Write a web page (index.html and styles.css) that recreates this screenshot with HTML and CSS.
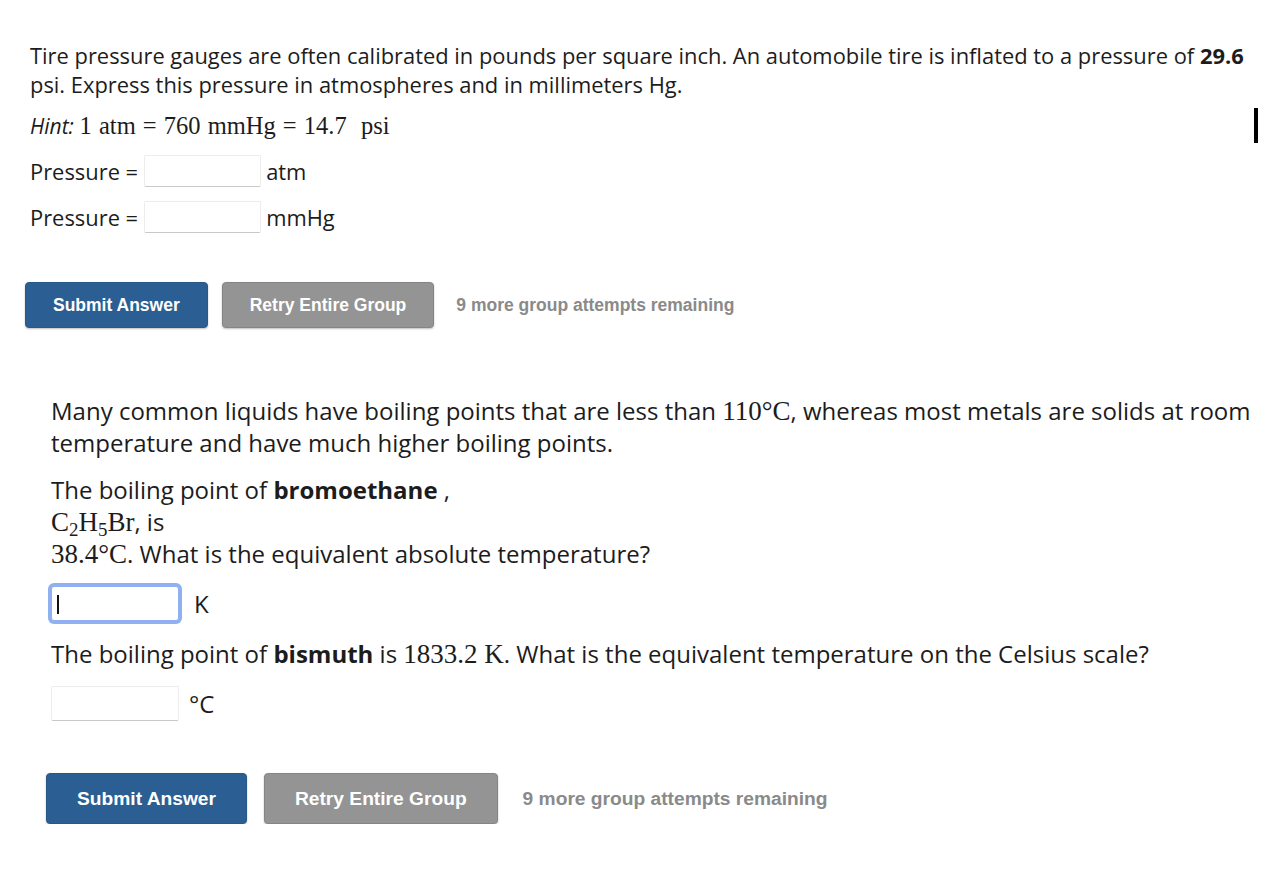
FILE: index.html
```html
<!DOCTYPE html>
<html lang="en">

<head>
    <meta charset="UTF-8">
    <title>Question Group</title>
    <link rel="stylesheet" href="styles.css">
</head>

<body>
    <span class="mouse-caret"></span>

    <div class="question q1">
        <p class="stem">Tire pressure gauges are often calibrated in pounds per square inch. An automobile tire is
            inflated to a pressure of <b>29.6</b> psi. Express this pressure in atmospheres and in millimeters Hg.</p>
        <p class="hint"><i>Hint:</i> <span class="math">1 atm = 760 mmHg = 14.7&nbsp; psi</span></p>

        <div class="answer-row">
            <span class="label">Pressure =</span>
            <input type="text" class="answer">
            <span class="unit">atm</span>
        </div>
        <div class="answer-row">
            <span class="label">Pressure =</span>
            <input type="text" class="answer">
            <span class="unit">mmHg</span>
        </div>

        <div class="actions">
            <button class="btn btn-submit">Submit Answer</button>
            <button class="btn btn-retry">Retry Entire Group</button>
            <span class="attempts">9 more group attempts remaining</span>
        </div>
    </div>

    <div class="question q2">
        <p class="stem">Many common liquids have boiling points that are less than <span class="math">110°C</span>,
            whereas most metals are solids at room temperature and have much higher boiling points.</p>
        <p class="stem">The boiling point of <b>bromoethane</b> ,<br>
            <span class="math">C<sub>2</sub>H<sub>5</sub>Br</span>, is<br>
            <span class="math">38.4°C</span>. What is the equivalent absolute temperature?</p>

        <div class="answer-row">
            <span class="input-wrap">
                <input type="text" class="answer focused">
                <span class="text-caret"></span>
            </span>
            <span class="unit unit-k">K</span>
        </div>

        <p class="stem">The boiling point of <b>bismuth</b> is <span class="math">1833.2 K</span>. What is the
            equivalent temperature on the Celsius scale?</p>

        <div class="answer-row">
            <input type="text" class="answer">
            <span class="unit unit-c">°C</span>
        </div>

        <div class="actions">
            <button class="btn btn-submit">Submit Answer</button>
            <button class="btn btn-retry">Retry Entire Group</button>
            <span class="attempts">9 more group attempts remaining</span>
        </div>
    </div>
</body>

</html>
```

FILE: styles.css
```css
body {
    margin: 0;
    font-family: "Open Sans", "Noto Sans", sans-serif;
    color: #1c1c1c;
    background: #fff;
}

p {
    margin: 0;
}

b {
    font-weight: 700;
}

/* math runs in a serif face and must not stretch the line */
.math {
    font-family: "Liberation Serif", "DejaVu Serif", serif;
    line-height: 1;
}

.math sub {
    font-size: 0.7em;
    line-height: 0;
    vertical-align: -0.25em;
}

/* first question */
.q1 {
    padding: 41px 20px 0 30px;
    font-size: 21.9px;
    line-height: 29px;
}

.q1 .hint {
    margin-top: 12px;
}

.q1 .hint i {
    font-size: 21px;
}

.q1 .hint .math {
    font-size: 24.5px;
    word-spacing: 1px;
}

.q1 .answer-row {
    margin-top: 14px;
}

.q1 .label {
    margin-right: 6px;
}

.q1 .answer {
    width: 117px;
    height: 32px;
}

.q1 .unit {
    margin-left: 5px;
}

.q1 .actions {
    margin: 49px 0 0 -5px;
    gap: 14px;
}

.q1 .btn {
    height: 46px;
    padding: 0 27px;
    font-size: 17.5px;
}

.q1 .attempts {
    margin-left: 8px;
    font-size: 17.5px;
}

/* second question */
.q2 {
    padding: 67px 20px 0 51px;
    font-size: 24px;
    line-height: 32px;
}

.q2 .stem + .stem {
    margin-top: 15px;
}

.q2 .math {
    font-size: 27px;
}

.q2 .answer-row {
    margin-top: 15px;
}

.q2 .answer-row + .stem {
    margin-top: 17px;
}

.q2 .stem + .answer-row {
    margin-top: 16px;
}

.q2 .answer {
    width: 128px;
    height: 35px;
}

.q2 .unit-k {
    margin-left: 15px;
}

.q2 .unit-c {
    margin-left: 10px;
}

.q2 .actions {
    margin: 52px 0 0 -5px;
    gap: 17px;
}

.q2 .btn {
    height: 51px;
    padding: 0 30px;
    font-size: 19.2px;
}

.q2 .attempts {
    margin-left: 8px;
    font-size: 19.2px;
}

/* inputs */
.answer-row {
    display: flex;
    align-items: center;
}

.answer {
    box-sizing: border-box;
    margin: 0;
    padding: 0 6px;
    border: 1px solid #ececec;
    border-bottom-color: #c9c9c9;
    border-radius: 2px;
    background: #fff;
    font: inherit;
    outline: none;
}

.answer.focused {
    border: 1px solid #8fb0f1;
    border-radius: 3px;
    box-shadow: 0 0 0 3px #8fb0f1;
}

.input-wrap {
    position: relative;
    display: flex;
}

.text-caret {
    position: absolute;
    left: 6px;
    top: 9px;
    width: 1.5px;
    height: 19px;
    background: #111;
}

/* buttons */
.actions {
    display: flex;
    align-items: center;
}

.btn {
    border: 1px solid transparent;
    border-radius: 4px;
    color: #fff;
    font-family: "Liberation Sans", Arial, sans-serif;
    font-weight: 700;
    cursor: pointer;
    box-shadow: 0 1px 2px rgba(0, 0, 0, 0.25);
}

.btn-submit {
    background: #2b5f93;
    border-color: #285888;
}

.btn-retry {
    background: #949494;
    border-color: #858585;
}

.attempts {
    color: #8a8a8a;
    font-family: "Liberation Sans", Arial, sans-serif;
    font-weight: 700;
}

/* mouse text cursor in the corner of the shot */
.mouse-caret {
    position: absolute;
    left: 1254px;
    top: 108px;
    width: 4px;
    height: 35px;
    background: #000;
}
```
